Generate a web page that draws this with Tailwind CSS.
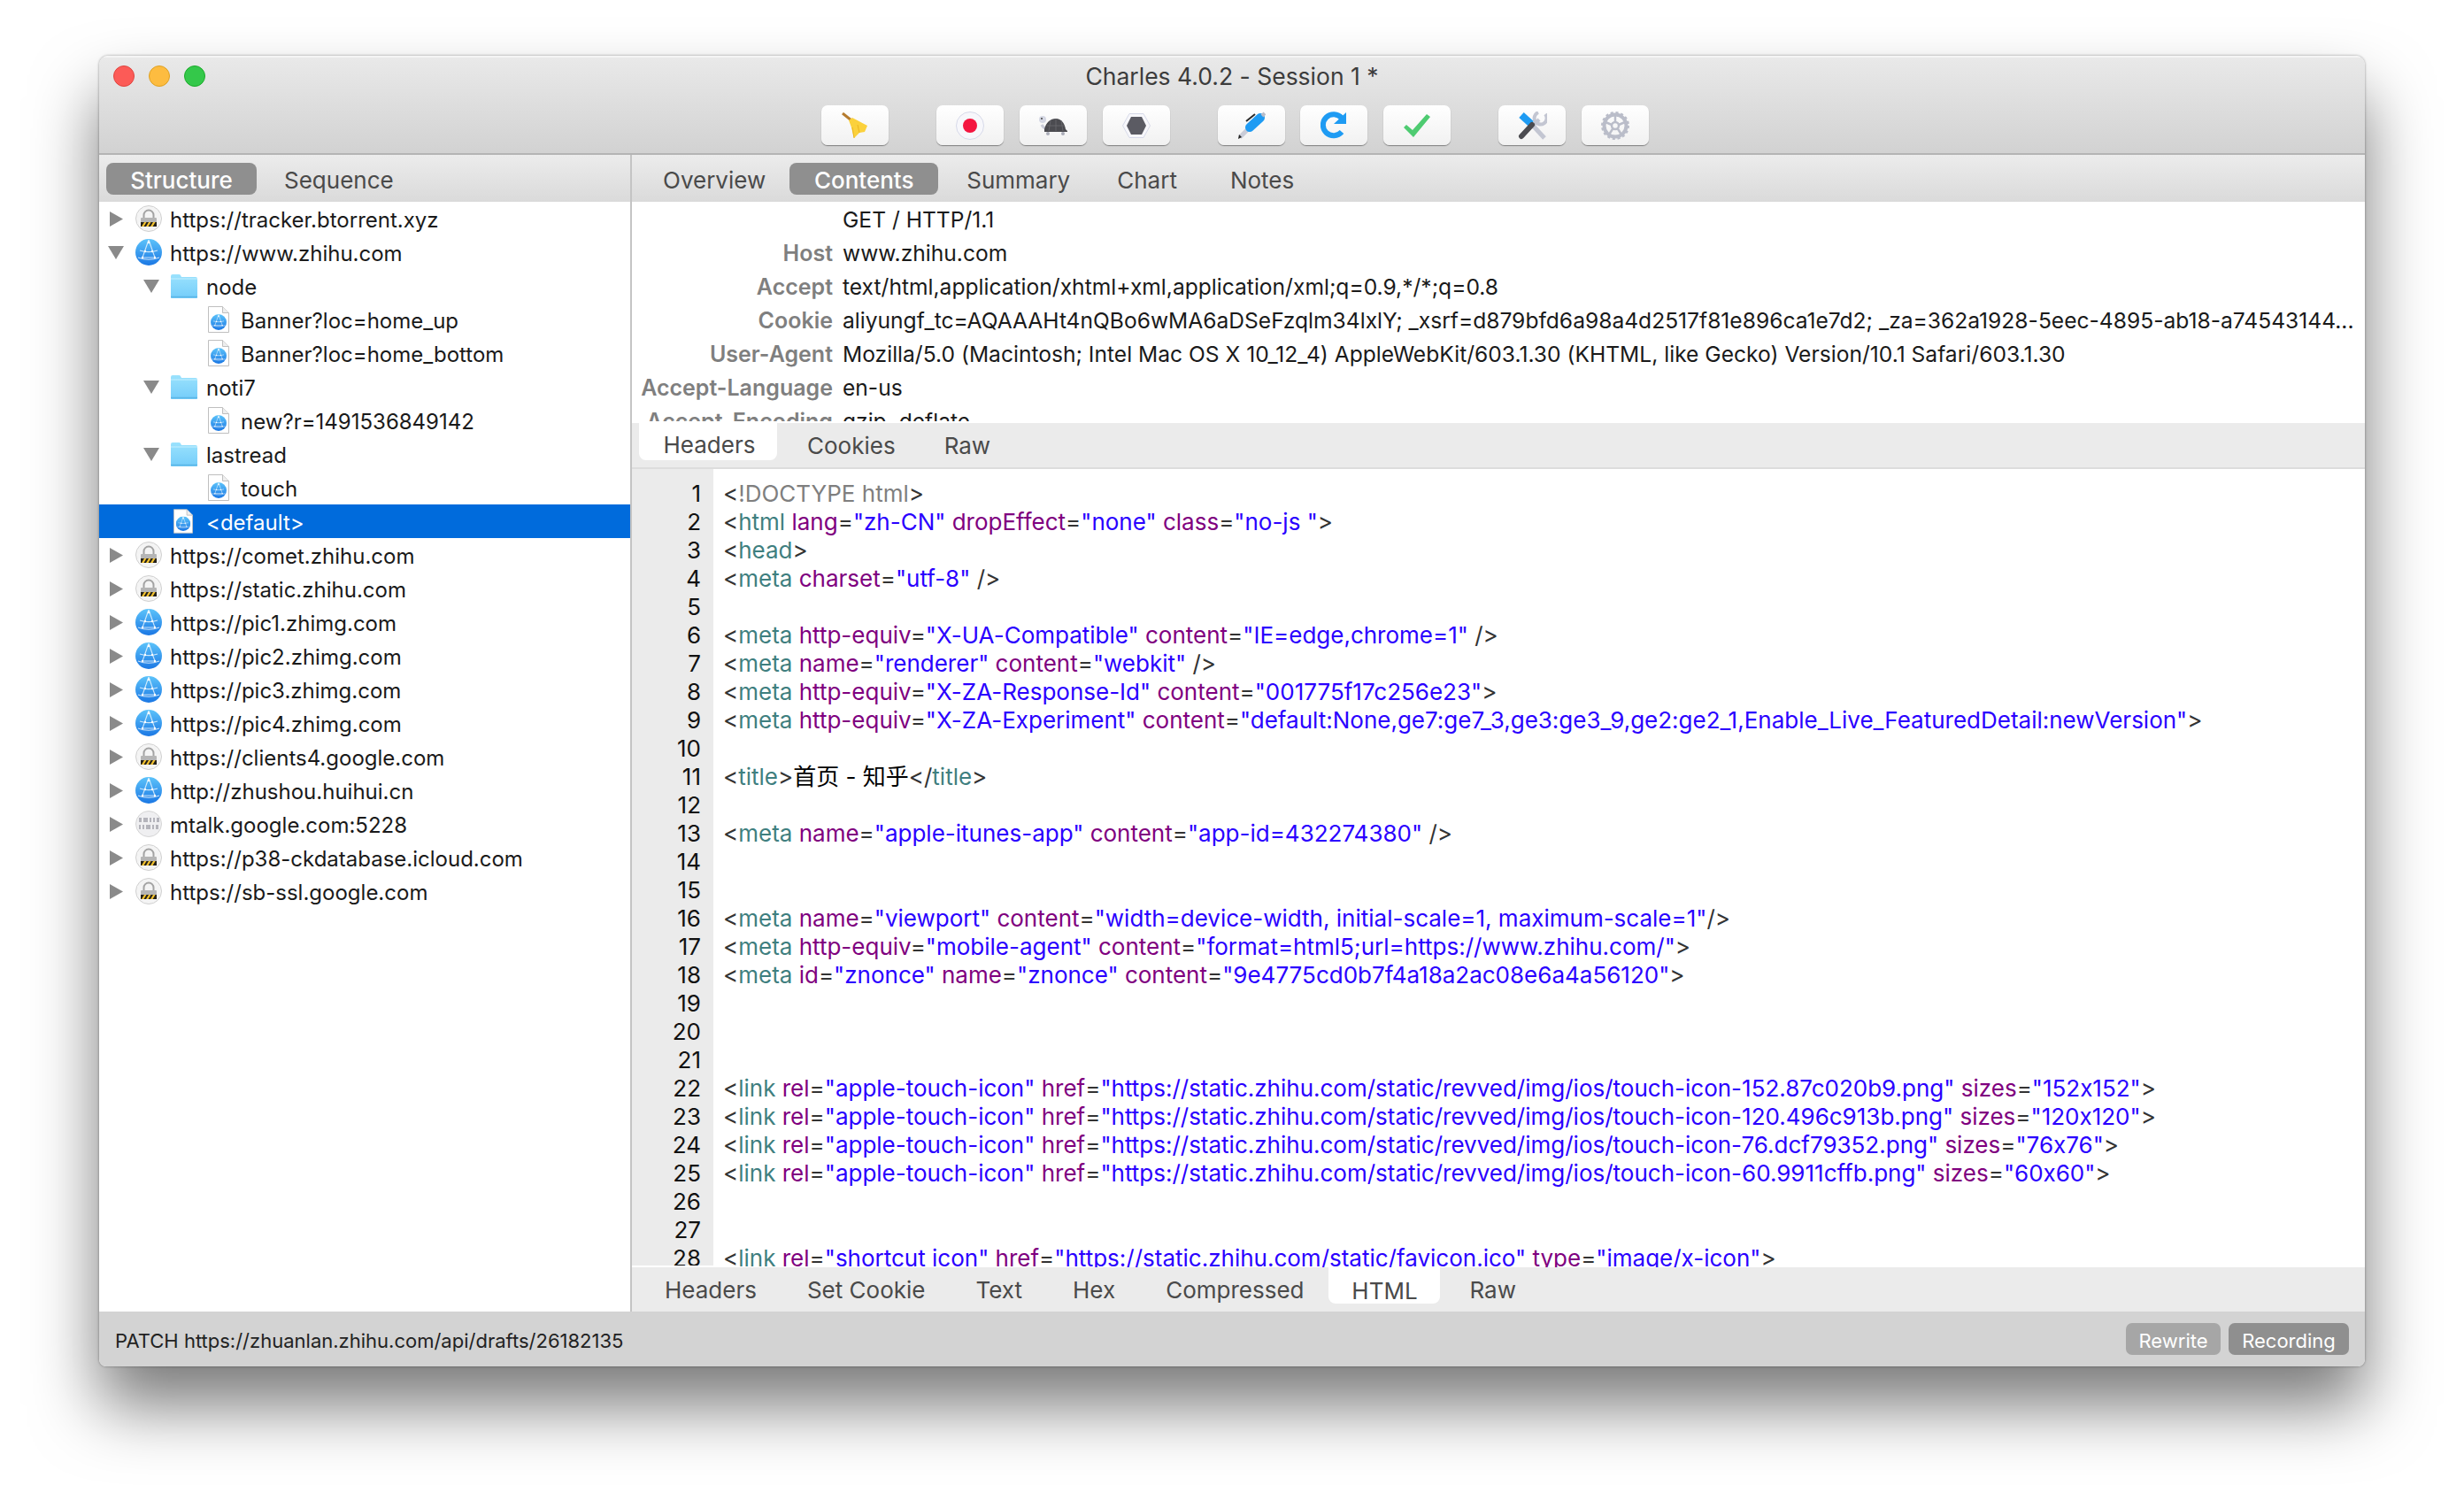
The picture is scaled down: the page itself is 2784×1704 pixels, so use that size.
<!DOCTYPE html>
<html>
<head>
<meta charset="utf-8">
<title>Charles 4.0.2 - Session 1 *</title>
<script src="https://cdn.jsdelivr.net/npm/@tailwindcss/browser@4"></script>
</head>
<body class="h-[1704px] overflow-hidden bg-white pt-[63px] pl-[112px] font-['Inter','Noto_Sans_CJK_SC',sans-serif] [font-feature-settings:'calt'_0] text-[24px] text-[#1a1a1a]">

<svg class="absolute w-0 h-0">
  <defs>
    <linearGradient id="gb" x1="0" y1="0" x2="0" y2="1"><stop offset="0" stop-color="#5cc3fa"/><stop offset="1" stop-color="#1b78e4"/></linearGradient>
    <linearGradient id="gf" x1="0" y1="0" x2="0" y2="1"><stop offset="0" stop-color="#9be2fd"/><stop offset="1" stop-color="#74cdfa"/></linearGradient>
    <symbol id="globe" viewBox="0 0 30 30">
      <circle cx="15" cy="15" r="15" fill="url(#gb)"/>
      <path d="M15 1 8 21M15 1l7 20M5 13c6 2 14 2 20 0M3 21c8 3 16 3 24 0M8 21l14 0M15 1v2" fill="none" stroke="#fff" stroke-opacity=".75" stroke-width="1.1"/>
      <circle cx="15" cy="4" r="1.3" fill="#fff"/><circle cx="11" cy="14" r="1.2" fill="#fff"/><circle cx="19" cy="14" r="1.2" fill="#fff"/><circle cx="8" cy="21" r="1.2" fill="#fff"/><circle cx="22" cy="21" r="1.2" fill="#fff"/>
    </symbol>
    <symbol id="lock" viewBox="0 0 30 30">
      <circle cx="15" cy="15" r="14.5" fill="#f4f4f4" stroke="#cfcfcf"/>
      <path d="M9.500 15v-4a5.500 5.500 0 0 1 11 0v4" fill="none" stroke="#a3a3a3" stroke-width="2"/>
      <rect x="6" y="14" width="18" height="10" rx="1" fill="#b5b5b5"/>
      <rect x="6" y="19" width="18" height="5" fill="#26221a"/>
      <path d="M7 24l3-5h2.500l-3 5zM12 24l3-5h2.500l-3 5zM17 24l3-5h2.500l-3 5z" fill="#f4c430"/>
    </symbol>
    <symbol id="folder" viewBox="0 0 30 30">
      <path d="M0 4a2 2 0 0 1 2-2h7a2 2 0 0 1 2 1l1 2h16a2 2 0 0 1 2 2v21a1 1 0 0 1-1 1H1a1 1 0 0 1-1-1z" fill="url(#gf)"/>
      <path d="M0 7h30" stroke="#c4effe" stroke-width="1"/>
      <path d="M0 27.500h30" stroke="#5cb6e6" stroke-width="1.500"/>
    </symbol>
    <symbol id="file" viewBox="0 0 24 30">
      <path d="M.5.500h16l7 7v22H.5z" fill="#fff" stroke="#bfbfbf"/>
      <path d="M16.500.500v7h7" fill="#eee" stroke="#bfbfbf"/>
      <use href="#globe" x="3" y="9" width="18" height="18"/>
    </symbol>
    <symbol id="other" viewBox="0 0 30 30">
      <circle cx="15" cy="15" r="14.500" fill="#efeff1" stroke="#d4d4d4"/>
      <path d="M4 8h3v5H4zM9 8h5v5H9zM16 8h2v5h-2zM20 8h2v5h-2zM24 8h3v5h-3zM4 16h2v5H4zM8 16h2v5H8zM12 16h5v5h-5zM19 16h2v5h-2zM23 16h3v5h-3z" fill="#b4b4bb"/>
    </symbol>
    <symbol id="right" viewBox="0 0 15 17"><path d="M0 0l15 8.500L0 17z" fill="#8a8a8a"/></symbol>
    <symbol id="down" viewBox="0 0 18 15"><path d="M0 0h18l-9 15z" fill="#8a8a8a"/></symbol>
  </defs>
</svg>

<div class="w-[2560px] h-[1481px] flex flex-col rounded-t-[10px] rounded-b-[8px] overflow-hidden shadow-[0_45px_75px_rgba(0,0,0,0.52),0_0_3px_rgba(0,0,0,0.4)]">

  <!-- title + toolbar -->
  <header class="h-[112px] shrink-0 relative bg-gradient-to-b from-[#e9e9e9] to-[#d2d2d2] border-t-2 border-t-[#f4f4f4] border-b-2 border-b-[#b4b4b4]">
    <div class="absolute left-[16px] top-[9px] flex gap-[16px]">
      <span class="w-[24px] h-[24px] rounded-full bg-[#fc5b57] border border-[#e0443e]"></span>
      <span class="w-[24px] h-[24px] rounded-full bg-[#fdbc40] border border-[#dea123]"></span>
      <span class="w-[24px] h-[24px] rounded-full bg-[#34c84a] border border-[#1aab29]"></span>
    </div>
    <div class="text-center text-[26.500px] leading-[42px] text-[#3c3c3c]">Charles 4.0.2 - Session 1 *</div>
    <div class="flex pl-[816px] pt-[12px]">
      <button class="w-[76px] h-[45px] flex items-center justify-center rounded-[7px] bg-gradient-to-b from-white to-[#f1f1f1] shadow-[0_1px_1px_rgba(0,0,0,0.4)]">
        <svg width="30" height="30" viewBox="0 0 30 30"><path d="M1 1l10 8" stroke="#b57b2e" stroke-width="3"/><path d="M8 9l4-3 17 9-3 7-6 1-6 6-3-12z" fill="#fbd13c"/><path d="M12 17l2 12M18 14l2 9" stroke="#eab41f"/></svg>
      </button>
      <button class="ml-[54px] w-[76px] h-[45px] flex items-center justify-center rounded-[7px] bg-gradient-to-b from-white to-[#f1f1f1] shadow-[0_1px_1px_rgba(0,0,0,0.4)]">
        <svg width="32" height="32" viewBox="0 0 32 32"><circle cx="16" cy="16" r="15.500" fill="#f7f7fb" stroke="#d6d9e8"/><circle cx="16" cy="16" r="8" fill="#f4153f"/></svg>
      </button>
      <button class="ml-[18px] w-[76px] h-[45px] flex items-center justify-center rounded-[7px] bg-gradient-to-b from-white to-[#f1f1f1] shadow-[0_1px_1px_rgba(0,0,0,0.4)]">
        <svg width="32" height="22" viewBox="0 0 32 22"><path d="M8 14c-3 0-4-2-5-4" stroke="#c9ccd8" stroke-width="3" fill="none"/><circle cx="4" cy="4" r="4" fill="#d5d8e4"/><circle cx="3" cy="3" r="1" fill="#444"/><path d="M6 15C8 7 13 3 19 3s10 5 11 12l2 2v1H6z" fill="#4b4b50"/><path d="M13 5l-2 12M19 3v14M25 5l2 12M9 11h20" stroke="#6a6a70" stroke-width=".8"/><circle cx="10" cy="20" r="2" fill="#a9acb8"/><circle cx="27" cy="20" r="2" fill="#a9acb8"/></svg>
      </button>
      <button class="ml-[18px] w-[76px] h-[45px] flex items-center justify-center rounded-[7px] bg-gradient-to-b from-white to-[#f1f1f1] shadow-[0_1px_1px_rgba(0,0,0,0.4)]">
        <svg width="32" height="28" viewBox="0 0 32 28"><path d="M8 .5h16L31.500 14 24 27.500H8L.5 14z" fill="#f7f7fb" stroke="#d6d9e8"/><path d="M10 4h12l5 10-5 10H10L5 14z" fill="#5b5b63"/></svg>
      </button>
      <button class="ml-[54px] w-[76px] h-[45px] flex items-center justify-center rounded-[7px] bg-gradient-to-b from-white to-[#f1f1f1] shadow-[0_1px_1px_rgba(0,0,0,0.4)]">
        <svg width="31" height="31" viewBox="0 0 31 31"><path d="M2 29L13 18" stroke="#c9ccd8" stroke-width="5"/><path d="M0 31l1-5 3 3z" fill="#222"/><path d="M13 18L25 7" stroke="#1e9bf3" stroke-width="10" stroke-linecap="round"/><path d="M27 5l3-3" stroke="#b9bcc8" stroke-width="4"/><path d="M9 11L19 3" stroke="#2a2a2a" stroke-width="2" fill="none"/></svg>
      </button>
      <button class="ml-[17px] w-[76px] h-[45px] flex items-center justify-center rounded-[7px] bg-gradient-to-b from-white to-[#f1f1f1] shadow-[0_1px_1px_rgba(0,0,0,0.4)]">
        <svg width="30" height="31" viewBox="0 0 30 31"><path d="M24 7.500A12 12 0 1 0 24 23" fill="none" stroke="#1e9bf3" stroke-width="6"/><path d="M29 1v13H15z" fill="#1e9bf3"/></svg>
      </button>
      <button class="ml-[18px] w-[76px] h-[45px] flex items-center justify-center rounded-[7px] bg-gradient-to-b from-white to-[#f1f1f1] shadow-[0_1px_1px_rgba(0,0,0,0.4)]">
        <svg width="30" height="26" viewBox="0 0 30 26"><path d="M0 15l3-3 7 6L26 0l4 3-19 23z" fill="#4ecb71"/></svg>
      </button>
      <button class="ml-[54px] w-[76px] h-[45px] flex items-center justify-center rounded-[7px] bg-gradient-to-b from-white to-[#f1f1f1] shadow-[0_1px_1px_rgba(0,0,0,0.4)]">
        <svg width="33" height="32" viewBox="0 0 33 32"><path d="M15 18L24 9" stroke="#c3c6d2" stroke-width="4"/><path d="M31 3a7 7 0 1 1-8-2" fill="none" stroke="#c3c6d2" stroke-width="4"/><path d="M18 17l12 13" stroke="#c3c6d2" stroke-width="5"/><path d="M4 4L15 14" stroke="#1e9bf3" stroke-width="8"/><path d="M16 15L4 28" stroke="#4b4b50" stroke-width="6" stroke-linecap="round"/></svg>
      </button>
      <button class="ml-[18px] w-[76px] h-[45px] flex items-center justify-center rounded-[7px] bg-gradient-to-b from-white to-[#f1f1f1] shadow-[0_1px_1px_rgba(0,0,0,0.4)]">
        <svg width="32" height="32" viewBox="0 0 32 32"><circle cx="16" cy="16" r="12.500" fill="none" stroke="#babdc9" stroke-width="4"/><circle cx="16" cy="16" r="14.500" fill="none" stroke="#babdc9" stroke-width="3" stroke-dasharray="3 2.700"/><circle cx="16" cy="16" r="4" fill="none" stroke="#babdc9" stroke-width="2.500"/><path d="M16 12V4M12 15L5 12M13.500 19L9 26M18.500 19L23 26M20 15l7-3" stroke="#babdc9" stroke-width="2.500"/></svg>
      </button>
    </div>
  </header>

  <!-- main -->
  <div class="flex-1 min-h-0 flex">

    <aside class="w-[600px] shrink-0 flex flex-col bg-white">
      <div class="h-[53px] shrink-0 flex items-center pl-[8px] bg-gradient-to-b from-[#ececec] to-[#dadada] text-[26px] text-[#4a4a4a] [&>span]:pt-[3px]">
        <span class="w-[170px] h-[36px] flex items-center justify-center rounded-[8px] bg-[#8f8f8f] text-white font-medium">Structure</span>
        <span class="ml-[31px]">Sequence</span>
      </div>
      <div class="flex flex-col [&_span]:pt-[3px]">
        <div class="h-[38px] flex items-center"><svg class="ml-[12px] w-[15px] h-[17px]"><use href="#right"/></svg><svg class="ml-[14px] w-[30px] h-[30px]"><use href="#lock"/></svg><span class="ml-[9px]">https://tracker.btorrent.xyz</span></div>
        <div class="h-[38px] flex items-center"><svg class="ml-[10px] w-[18px] h-[15px]"><use href="#down"/></svg><svg class="ml-[13px] w-[30px] h-[30px]"><use href="#globe"/></svg><span class="ml-[9px]">https://www.zhihu.com</span></div>
        <div class="h-[38px] flex items-center"><svg class="ml-[50px] w-[18px] h-[15px]"><use href="#down"/></svg><svg class="ml-[13px] w-[30px] h-[30px]"><use href="#folder"/></svg><span class="ml-[10px]">node</span></div>
        <div class="h-[38px] flex items-center"><svg class="ml-[123px] w-[24px] h-[30px]"><use href="#file"/></svg><span class="ml-[13px]">Banner?loc=home_up</span></div>
        <div class="h-[38px] flex items-center"><svg class="ml-[123px] w-[24px] h-[30px]"><use href="#file"/></svg><span class="ml-[13px]">Banner?loc=home_bottom</span></div>
        <div class="h-[38px] flex items-center"><svg class="ml-[50px] w-[18px] h-[15px]"><use href="#down"/></svg><svg class="ml-[13px] w-[30px] h-[30px]"><use href="#folder"/></svg><span class="ml-[10px]">noti7</span></div>
        <div class="h-[38px] flex items-center"><svg class="ml-[123px] w-[24px] h-[30px]"><use href="#file"/></svg><span class="ml-[13px]">new?r=1491536849142</span></div>
        <div class="h-[38px] flex items-center"><svg class="ml-[50px] w-[18px] h-[15px]"><use href="#down"/></svg><svg class="ml-[13px] w-[30px] h-[30px]"><use href="#folder"/></svg><span class="ml-[10px]">lastread</span></div>
        <div class="h-[38px] flex items-center"><svg class="ml-[123px] w-[24px] h-[30px]"><use href="#file"/></svg><span class="ml-[13px]">touch</span></div>
        <div class="h-[38px] flex items-center bg-[#006bdc] text-white"><svg class="ml-[84px] w-[22px] h-[28px]"><use href="#file"/></svg><span class="ml-[15px]">&lt;default&gt;</span></div>
        <div class="h-[38px] flex items-center"><svg class="ml-[12px] w-[15px] h-[17px]"><use href="#right"/></svg><svg class="ml-[14px] w-[30px] h-[30px]"><use href="#lock"/></svg><span class="ml-[9px]">https://comet.zhihu.com</span></div>
        <div class="h-[38px] flex items-center"><svg class="ml-[12px] w-[15px] h-[17px]"><use href="#right"/></svg><svg class="ml-[14px] w-[30px] h-[30px]"><use href="#lock"/></svg><span class="ml-[9px]">https://static.zhihu.com</span></div>
        <div class="h-[38px] flex items-center"><svg class="ml-[12px] w-[15px] h-[17px]"><use href="#right"/></svg><svg class="ml-[14px] w-[30px] h-[30px]"><use href="#globe"/></svg><span class="ml-[9px]">https://pic1.zhimg.com</span></div>
        <div class="h-[38px] flex items-center"><svg class="ml-[12px] w-[15px] h-[17px]"><use href="#right"/></svg><svg class="ml-[14px] w-[30px] h-[30px]"><use href="#globe"/></svg><span class="ml-[9px]">https://pic2.zhimg.com</span></div>
        <div class="h-[38px] flex items-center"><svg class="ml-[12px] w-[15px] h-[17px]"><use href="#right"/></svg><svg class="ml-[14px] w-[30px] h-[30px]"><use href="#globe"/></svg><span class="ml-[9px]">https://pic3.zhimg.com</span></div>
        <div class="h-[38px] flex items-center"><svg class="ml-[12px] w-[15px] h-[17px]"><use href="#right"/></svg><svg class="ml-[14px] w-[30px] h-[30px]"><use href="#globe"/></svg><span class="ml-[9px]">https://pic4.zhimg.com</span></div>
        <div class="h-[38px] flex items-center"><svg class="ml-[12px] w-[15px] h-[17px]"><use href="#right"/></svg><svg class="ml-[14px] w-[30px] h-[30px]"><use href="#lock"/></svg><span class="ml-[9px]">https://clients4.google.com</span></div>
        <div class="h-[38px] flex items-center"><svg class="ml-[12px] w-[15px] h-[17px]"><use href="#right"/></svg><svg class="ml-[14px] w-[30px] h-[30px]"><use href="#globe"/></svg><span class="ml-[9px]">http://zhushou.huihui.cn</span></div>
        <div class="h-[38px] flex items-center"><svg class="ml-[12px] w-[15px] h-[17px]"><use href="#right"/></svg><svg class="ml-[14px] w-[30px] h-[30px]"><use href="#other"/></svg><span class="ml-[9px]">mtalk.google.com:5228</span></div>
        <div class="h-[38px] flex items-center"><svg class="ml-[12px] w-[15px] h-[17px]"><use href="#right"/></svg><svg class="ml-[14px] w-[30px] h-[30px]"><use href="#lock"/></svg><span class="ml-[9px]">https://p38-ckdatabase.icloud.com</span></div>
        <div class="h-[38px] flex items-center"><svg class="ml-[12px] w-[15px] h-[17px]"><use href="#right"/></svg><svg class="ml-[14px] w-[30px] h-[30px]"><use href="#lock"/></svg><span class="ml-[9px]">https://sb-ssl.google.com</span></div>
      </div>
    </aside>

    <section class="flex-1 min-w-0 flex flex-col border-l-2 border-l-[#c4c4c4] bg-white">
      <div class="h-[53px] shrink-0 flex items-center pl-[8px] bg-gradient-to-b from-[#ececec] to-[#dadada] text-[26px] text-[#4a4a4a] [&>span]:pt-[3px]">
        <span class="px-[27px]">Overview</span>
        <span class="w-[168px] h-[36px] flex items-center justify-center rounded-[8px] bg-[#8f8f8f] text-white font-medium">Contents</span>
        <span class="pl-[32px] pr-[26px]">Summary</span>
        <span class="pl-[27px] pr-[60px]">Chart</span>
        <span>Notes</span>
      </div>

      <div class="h-[248px] mb-[2px] shrink-0 overflow-hidden whitespace-nowrap text-[24.600px] [&_span]:pt-[3px]">
        <div class="h-[38px] flex items-center"><span class="w-[227px] shrink-0 text-[25px] text-right font-semibold text-[#7f7f7f]"></span><span class="ml-[11px]">GET / HTTP/1.1</span></div>
        <div class="h-[38px] flex items-center"><span class="w-[227px] shrink-0 text-[25px] text-right font-semibold text-[#7f7f7f]">Host</span><span class="ml-[11px]">www.zhihu.com</span></div>
        <div class="h-[38px] flex items-center"><span class="w-[227px] shrink-0 text-[25px] text-right font-semibold text-[#7f7f7f]">Accept</span><span class="ml-[11px]">text/html,application/xhtml+xml,application/xml;q=0.9,*/*;q=0.8</span></div>
        <div class="h-[38px] flex items-center"><span class="w-[227px] shrink-0 text-[25px] text-right font-semibold text-[#7f7f7f]">Cookie</span><span class="ml-[11px]">aliyungf_tc=AQAAAHt4nQBo6wMA6aDSeFzqlm34lxlY; _xsrf=d879bfd6a98a4d2517f81e896ca1e7d2; _za=362a1928-5eec-4895-ab18-a74543144...</span></div>
        <div class="h-[38px] flex items-center"><span class="w-[227px] shrink-0 text-[25px] text-right font-semibold text-[#7f7f7f]">User-Agent</span><span class="ml-[11px]">Mozilla/5.0 (Macintosh; Intel Mac OS X 10_12_4) AppleWebKit/603.1.30 (KHTML, like Gecko) Version/10.1 Safari/603.1.30</span></div>
        <div class="h-[38px] flex items-center"><span class="w-[227px] shrink-0 text-[25px] text-right font-semibold text-[#7f7f7f]">Accept-Language</span><span class="ml-[11px]">en-us</span></div>
        <div class="h-[38px] flex items-center"><span class="w-[227px] shrink-0 text-[25px] text-right font-semibold text-[#7f7f7f]">Accept-Encoding</span><span class="ml-[11px]">gzip, deflate</span></div>
      </div>

      <div class="h-[52px] shrink-0 flex items-start bg-[#ebebeb] border-b-2 border-b-[#dcdcdc] text-[26px] text-[#4a4a4a]">
        <span class="ml-[8px] w-[156px] h-[42px] pt-[7px] pl-[3px] flex items-center justify-center rounded-b-[8px] bg-white">Headers</span>
        <span class="ml-[34px] pt-[5px] leading-[42px]">Cookies</span>
        <span class="ml-[55px] pt-[5px] leading-[42px]">Raw</span>
      </div>

      <div class="h-[902px] shrink-0 overflow-hidden flex items-start text-[26px] whitespace-nowrap">
        <div class="w-[92px] h-[900px] overflow-hidden shrink-0 bg-[#ebebeb] pt-[12px] pr-[14px] text-right text-[#111] leading-[32px]">
          <div>1</div><div>2</div><div>3</div><div>4</div><div>5</div><div>6</div><div>7</div><div>8</div><div>9</div><div>10</div><div>11</div><div>12</div><div>13</div><div>14</div><div>15</div><div>16</div><div>17</div><div>18</div><div>19</div><div>20</div><div>21</div><div>22</div><div>23</div><div>24</div><div>25</div><div>26</div><div>27</div><div>28</div>
        </div>
        <div class="pl-[11px] pt-[12px] leading-[32px] text-[#333]">
          <div class="text-[#7f7f7f]"><span class="text-[#333]">&lt;</span>!DOCTYPE html<span class="text-[#333]">&gt;</span></div>
          <div>&lt;<span class="text-[#3f7f7f]">html</span> <span class="text-[#7f007f]">lang</span>=<span class="text-[#2a00ff]">"zh-CN"</span> <span class="text-[#7f007f]">dropEffect</span>=<span class="text-[#2a00ff]">"none"</span> <span class="text-[#7f007f]">class</span>=<span class="text-[#2a00ff]">"no-js "</span>&gt;</div>
          <div>&lt;<span class="text-[#3f7f7f]">head</span>&gt;</div>
          <div>&lt;<span class="text-[#3f7f7f]">meta</span> <span class="text-[#7f007f]">charset</span>=<span class="text-[#2a00ff]">"utf-8"</span> /&gt;</div>
          <div class="h-[32px]"></div>
          <div>&lt;<span class="text-[#3f7f7f]">meta</span> <span class="text-[#7f007f]">http-equiv</span>=<span class="text-[#2a00ff]">"X-UA-Compatible"</span> <span class="text-[#7f007f]">content</span>=<span class="text-[#2a00ff]">"IE=edge,chrome=1"</span> /&gt;</div>
          <div>&lt;<span class="text-[#3f7f7f]">meta</span> <span class="text-[#7f007f]">name</span>=<span class="text-[#2a00ff]">"renderer"</span> <span class="text-[#7f007f]">content</span>=<span class="text-[#2a00ff]">"webkit"</span> /&gt;</div>
          <div>&lt;<span class="text-[#3f7f7f]">meta</span> <span class="text-[#7f007f]">http-equiv</span>=<span class="text-[#2a00ff]">"X-ZA-Response-Id"</span> <span class="text-[#7f007f]">content</span>=<span class="text-[#2a00ff]">"001775f17c256e23"</span>&gt;</div>
          <div>&lt;<span class="text-[#3f7f7f]">meta</span> <span class="text-[#7f007f]">http-equiv</span>=<span class="text-[#2a00ff]">"X-ZA-Experiment"</span> <span class="text-[#7f007f]">content</span>=<span class="text-[#2a00ff]">"default:None,ge7:ge7_3,ge3:ge3_9,ge2:ge2_1,Enable_Live_FeaturedDetail:newVersion"</span>&gt;</div>
          <div class="h-[32px]"></div>
          <div>&lt;<span class="text-[#3f7f7f]">title</span>&gt;<span class="text-black">首页 - 知乎</span>&lt;/<span class="text-[#3f7f7f]">title</span>&gt;</div>
          <div class="h-[32px]"></div>
          <div>&lt;<span class="text-[#3f7f7f]">meta</span> <span class="text-[#7f007f]">name</span>=<span class="text-[#2a00ff]">"apple-itunes-app"</span> <span class="text-[#7f007f]">content</span>=<span class="text-[#2a00ff]">"app-id=432274380"</span> /&gt;</div>
          <div class="h-[64px]"></div>
          <div>&lt;<span class="text-[#3f7f7f]">meta</span> <span class="text-[#7f007f]">name</span>=<span class="text-[#2a00ff]">"viewport"</span> <span class="text-[#7f007f]">content</span>=<span class="text-[#2a00ff]">"width=device-width, initial-scale=1, maximum-scale=1"</span>/&gt;</div>
          <div>&lt;<span class="text-[#3f7f7f]">meta</span> <span class="text-[#7f007f]">http-equiv</span>=<span class="text-[#2a00ff]">"mobile-agent"</span> <span class="text-[#7f007f]">content</span>=<span class="text-[#2a00ff]">"format=html5;url=https://www.zhihu.com/"</span>&gt;</div>
          <div>&lt;<span class="text-[#3f7f7f]">meta</span> <span class="text-[#7f007f]">id</span>=<span class="text-[#2a00ff]">"znonce"</span> <span class="text-[#7f007f]">name</span>=<span class="text-[#2a00ff]">"znonce"</span> <span class="text-[#7f007f]">content</span>=<span class="text-[#2a00ff]">"9e4775cd0b7f4a18a2ac08e6a4a56120"</span>&gt;</div>
          <div class="h-[96px]"></div>
          <div>&lt;<span class="text-[#3f7f7f]">link</span> <span class="text-[#7f007f]">rel</span>=<span class="text-[#2a00ff]">"apple-touch-icon"</span> <span class="text-[#7f007f]">href</span>=<span class="text-[#2a00ff]">"https://static.zhihu.com/static/revved/img/ios/touch-icon-152.87c020b9.png"</span> <span class="text-[#7f007f]">sizes</span>=<span class="text-[#2a00ff]">"152x152"</span>&gt;</div>
          <div>&lt;<span class="text-[#3f7f7f]">link</span> <span class="text-[#7f007f]">rel</span>=<span class="text-[#2a00ff]">"apple-touch-icon"</span> <span class="text-[#7f007f]">href</span>=<span class="text-[#2a00ff]">"https://static.zhihu.com/static/revved/img/ios/touch-icon-120.496c913b.png"</span> <span class="text-[#7f007f]">sizes</span>=<span class="text-[#2a00ff]">"120x120"</span>&gt;</div>
          <div>&lt;<span class="text-[#3f7f7f]">link</span> <span class="text-[#7f007f]">rel</span>=<span class="text-[#2a00ff]">"apple-touch-icon"</span> <span class="text-[#7f007f]">href</span>=<span class="text-[#2a00ff]">"https://static.zhihu.com/static/revved/img/ios/touch-icon-76.dcf79352.png"</span> <span class="text-[#7f007f]">sizes</span>=<span class="text-[#2a00ff]">"76x76"</span>&gt;</div>
          <div>&lt;<span class="text-[#3f7f7f]">link</span> <span class="text-[#7f007f]">rel</span>=<span class="text-[#2a00ff]">"apple-touch-icon"</span> <span class="text-[#7f007f]">href</span>=<span class="text-[#2a00ff]">"https://static.zhihu.com/static/revved/img/ios/touch-icon-60.9911cffb.png"</span> <span class="text-[#7f007f]">sizes</span>=<span class="text-[#2a00ff]">"60x60"</span>&gt;</div>
          <div class="h-[64px]"></div>
          <div>&lt;<span class="text-[#3f7f7f]">link</span> <span class="text-[#7f007f]">rel</span>=<span class="text-[#2a00ff]">"shortcut icon"</span> <span class="text-[#7f007f]">href</span>=<span class="text-[#2a00ff]">"https://static.zhihu.com/static/favicon.ico"</span> <span class="text-[#7f007f]">type</span>=<span class="text-[#2a00ff]">"image/x-icon"</span>&gt;</div>
        </div>
      </div>

      <div class="flex-1 flex items-start bg-[#ebebeb] text-[26px] text-[#4a4a4a] whitespace-nowrap">
        <span class="ml-[37px] leading-[52px]">Headers</span>
        <span class="ml-[57px] leading-[52px]">Set Cookie</span>
        <span class="ml-[57px] leading-[52px]">Text</span>
        <span class="ml-[57px] leading-[52px]">Hex</span>
        <span class="ml-[57px] leading-[52px]">Compressed</span>
        <span class="ml-[28px] w-[126px] h-[41px] pt-[11px] flex items-center justify-center rounded-b-[8px] bg-white">HTML</span>
        <span class="ml-[33px] leading-[52px]">Raw</span>
      </div>
    </section>
  </div>

  <!-- status bar -->
  <footer class="h-[62px] shrink-0 flex items-center bg-[#d3d3d3] pl-[18px] pr-[18px] text-[22px] text-[#222] [&>span]:pt-[4px]">
    <span class="flex-1">PATCH https://zhuanlan.zhihu.com/api/drafts/26182135</span>
    <span class="w-[107px] h-[36px] flex items-center justify-center rounded-[7px] bg-[#a6a6a6] text-white">Rewrite</span>
    <span class="ml-[9px] w-[136px] h-[36px] flex items-center justify-center rounded-[7px] bg-[#8f8f8f] text-white">Recording</span>
  </footer>
</div>

</body>
</html>
